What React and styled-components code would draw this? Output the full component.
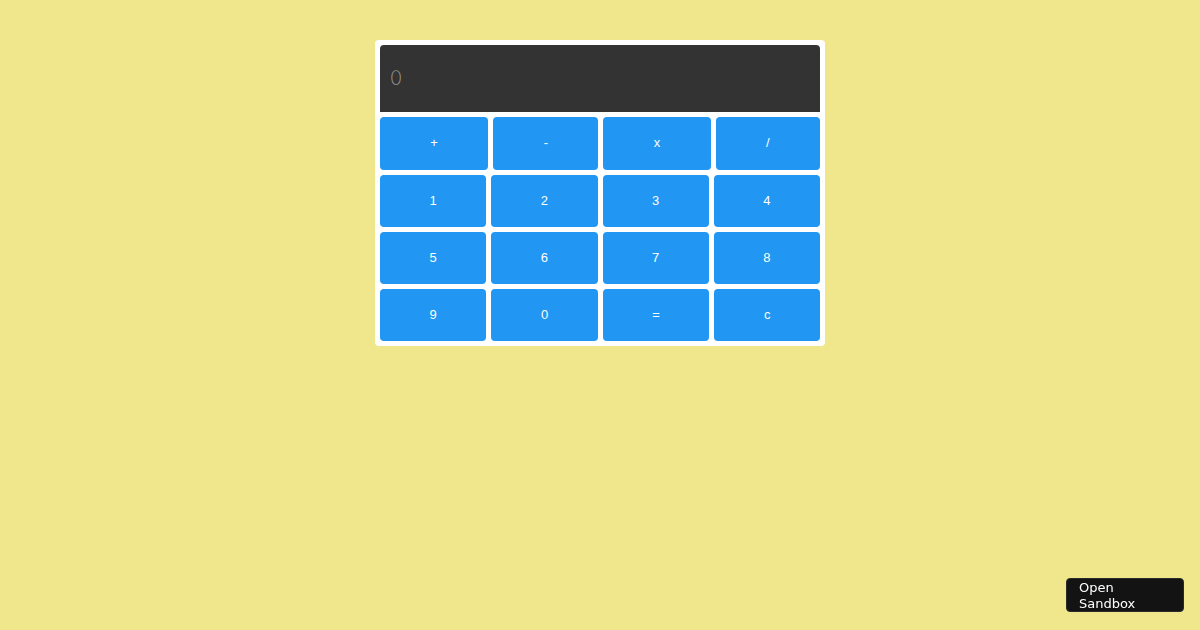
import React, { useState } from "react";
import styled, { createGlobalStyle } from "styled-components";

const Global = createGlobalStyle`
  html, body {
    margin: 0;
    padding: 0;
    background: #f0e68c;
    font-family: "Liberation Sans", Arial, sans-serif;
  }
`;

const Page = styled.div`
  min-height: 630px;
  padding-top: 40px;
  box-sizing: border-box;
  display: flex;
  justify-content: center;
  align-items: flex-start;
`;

const Calculator = styled.div`
  width: 450px;
  box-sizing: border-box;
  background: #fff;
  border-radius: 4px;
  padding: 5px;
  display: flex;
  flex-direction: column;
  gap: 5px;
`;

const Display = styled.div`
  height: 67px;
  box-sizing: border-box;
  background: #333;
  border-radius: 4px 4px 0 0;
  display: flex;
  align-items: center;
  padding: 0 10px 2px 10px;
  color: #9a9a9a;
  font-family: Inter, "DejaVu Sans", sans-serif;
  font-weight: 200;
  font-size: 20px;
`;

const Row = styled.div`
  display: flex;
  gap: 5px;
`;

const Key = styled.button`
  flex: 1 1 auto;
  height: ${(p) => (p.$tall ? "53px" : "52px")};
  border: none;
  border-radius: 4px;
  background: #2196f3;
  color: #fff;
  font-family: "Liberation Sans", Arial, sans-serif;
  font-size: 13px;
  padding: 0 6px 2px;
  cursor: pointer;
`;

const SandboxButton = styled.button`
  position: fixed;
  right: 16px;
  bottom: 18px;
  width: 118px;
  height: 34px;
  background: #131313;
  color: #fff;
  border: 1px solid #2a2a2a;
  border-radius: 4px;
  font-family: "DejaVu Sans", sans-serif;
  font-size: 13px;
  line-height: 16px;
  text-align: left;
  padding: 1px 12px 0;
`;

const rows = [
  ["+", "-", "x", "/"],
  ["1", "2", "3", "4"],
  ["5", "6", "7", "8"],
  ["9", "0", "=", "c"],
];

export default function App() {
  const [value, setValue] = useState("0");

  const press = (k) => {
    if (k === "c") return setValue("0");
    if (k === "=") {
      try {
        const expr = value.replace(/x/g, "*");
        // eslint-disable-next-line no-new-func
        setValue(String(Function(`return (${expr})`)()));
      } catch (e) {
        setValue("0");
      }
      return;
    }
    setValue(value === "0" ? k : value + k);
  };

  return (
    <>
      <Global />
      <Page>
        <Calculator>
          <Display>{value}</Display>
          {rows.map((row, i) => (
            <Row key={i}>
              {row.map((k) => (
                <Key key={k} $tall={i === 0} onClick={() => press(k)}>
                  {k}
                </Key>
              ))}
            </Row>
          ))}
        </Calculator>
      </Page>
      <SandboxButton>Open Sandbox</SandboxButton>
    </>
  );
}
